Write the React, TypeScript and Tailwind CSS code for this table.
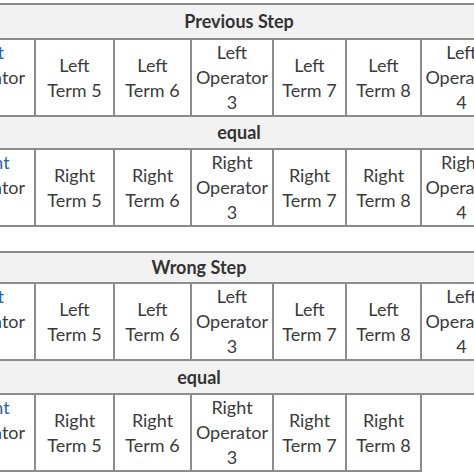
const cols = [92, 79, 77, 82, 73, 75, 81];

type Cell = { first: string; rest: string[] };

const leftCells: Cell[] = [
  { first: "Left", rest: ["Operator", "2"] },
  { first: "Left", rest: ["Term 5"] },
  { first: "Left", rest: ["Term 6"] },
  { first: "Left", rest: ["Operator", "3"] },
  { first: "Left", rest: ["Term 7"] },
  { first: "Left", rest: ["Term 8"] },
  { first: "Left", rest: ["Operator", "4"] },
];

const rightCells: Cell[] = leftCells.map((c) => ({ ...c, first: "Right" }));

const TermRow = ({ cells }: { cells: Cell[] }) => (
  <tr className="h-[77px]">
    {cells.map((c, i) => (
      <td
        key={i}
        className="border-2 border-[#8c8c8c] text-center align-middle p-0 leading-[25px]"
      >
        <span className={i === 0 ? "text-[#2f5ea8]" : ""}>{c.first}</span>
        {c.rest.map((r) => (
          <div key={r}>{r}</div>
        ))}
      </td>
    ))}
  </tr>
);

const BandRow = ({ label, h, pad }: { label: string; h: string; pad: string }) => (
  <tr className={h}>
    <td
      colSpan={7}
      className={`border-2 border-[#8c8c8c] bg-[#f2f2f2] text-center align-middle font-bold text-[#333] ${pad}`}
    >
      {label}
    </td>
  </tr>
);

const StepTable = ({
  title,
  titleH,
  equalH,
  pad,
  lastCut,
}: {
  title: string;
  titleH: string;
  equalH: string;
  pad: string;
  lastCut?: boolean;
}) => (
  <table className="table-fixed border-collapse w-[559px]">
    <colgroup>
      {cols.map((w, i) => (
        <col key={i} style={{ width: w }} />
      ))}
    </colgroup>
    <tbody>
      <BandRow label={title} h={titleH} pad={pad} />
      <TermRow cells={leftCells} />
      <BandRow label="equal" h={equalH} pad={pad} />
      <TermRow cells={lastCut ? rightCells.slice(0, 6) : rightCells} />
    </tbody>
  </table>
);

export default function App() {
  return (
    <div
      className="w-[474px] h-[474px] overflow-hidden bg-white text-[18px] text-[#3b3b3b]"
      style={{ fontFamily: "Lato, 'Open Sans', sans-serif" }}
    >
      <div className="ml-[-58px] pt-[3px] flex flex-col gap-[24px]">
        <StepTable title="Previous Step" titleH="h-[35px]" equalH="h-[33px]" pad="pl-[33px]" />
        <StepTable title="Wrong Step" titleH="h-[31px]" equalH="h-[34px]" pad="pr-[47px]" lastCut />
      </div>
    </div>
  );
}
